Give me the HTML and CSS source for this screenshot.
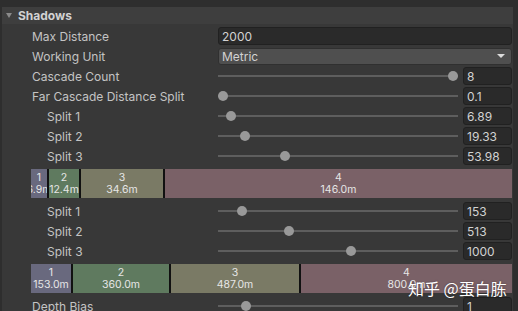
FILE: index.html
```html
<!DOCTYPE html>
<html lang="en">
<head>
    <meta charset="UTF-8">
    <meta name="viewport" content="width=device-width, initial-scale=1.0">
    <title>Shadows</title>
    <link rel="stylesheet" href="styles.css">
</head>
<body>
    <div class="inspector">
        <div class="header">
            <span class="foldout"></span>
            <span class="header-title">Shadows</span>
        </div>

        <div class="content">
            <div class="row">
                <div class="label">Max Distance</div>
                <div class="field text-field">2000</div>
            </div>
            <div class="row">
                <div class="label">Working Unit</div>
                <div class="field dropdown">Metric<span class="arrow"></span></div>
            </div>
            <div class="row">
                <div class="label">Cascade Count</div>
                <div class="slider"><div class="track"><span class="knob" style="left: 230px"></span></div></div>
                <div class="number">8</div>
            </div>
            <div class="row">
                <div class="label">Far Cascade Distance Split</div>
                <div class="slider"><div class="track"><span class="knob" style="left: 0px"></span></div></div>
                <div class="number">0.1</div>
            </div>
            <div class="row sub">
                <div class="label">Split 1</div>
                <div class="slider"><div class="track"><span class="knob" style="left: 8px"></span></div></div>
                <div class="number">6.89</div>
            </div>
            <div class="row sub">
                <div class="label">Split 2</div>
                <div class="slider"><div class="track"><span class="knob" style="left: 22px"></span></div></div>
                <div class="number">19.33</div>
            </div>
            <div class="row sub">
                <div class="label">Split 3</div>
                <div class="slider"><div class="track"><span class="knob" style="left: 62px"></span></div></div>
                <div class="number">53.98</div>
            </div>

            <div class="cascades">
                <div class="cascade c1" style="width: 16px"><span>1</span><span>6.9m</span></div>
                <div class="cascade c2" style="width: 30px"><span>2</span><span>12.4m</span></div>
                <div class="cascade c3" style="width: 82px"><span>3</span><span>34.6m</span></div>
                <div class="cascade c4" style="flex: 1"><span>4</span><span>146.0m</span></div>
            </div>

            <div class="row sub">
                <div class="label">Split 1</div>
                <div class="slider"><div class="track"><span class="knob" style="left: 19px"></span></div></div>
                <div class="number">153</div>
            </div>
            <div class="row sub">
                <div class="label">Split 2</div>
                <div class="slider"><div class="track"><span class="knob" style="left: 66px"></span></div></div>
                <div class="number">513</div>
            </div>
            <div class="row sub">
                <div class="label">Split 3</div>
                <div class="slider"><div class="track"><span class="knob" style="left: 128px"></span></div></div>
                <div class="number">1000</div>
            </div>

            <div class="cascades">
                <div class="cascade c1" style="width: 40px"><span>1</span><span>153.0m</span></div>
                <div class="cascade c2" style="width: 96px"><span>2</span><span>360.0m</span></div>
                <div class="cascade c3" style="width: 128px"><span>3</span><span>487.0m</span></div>
                <div class="cascade c4" style="flex: 1"><span>4</span><span>800.0m</span></div>
            </div>

            <div class="row">
                <div class="label">Depth Bias</div>
                <div class="slider"><div class="track"><span class="knob" style="left: 23px"></span></div></div>
                <div class="number">1</div>
            </div>
        </div>
    </div>

    <div class="watermark">知乎 @蛋白胨</div>
</body>
</html>
```

FILE: styles.css
```css
:root {
    --body-color: #2e2e2e;
    --panel-color: #383838;
    --header-color: #3e3e3e;
    --text-color: #c4c4c4;
    --field-color: #2a2a2a;
    --field-border: #212121;
    --track-color: #5e5e5e;
    --knob-color: #999999;
    --font: Inter, "Noto Sans CJK SC", sans-serif;
}

* {
    box-sizing: border-box;
    margin: 0;
    padding: 0;
}

body {
    width: 518px;
    height: 311px;
    overflow: hidden;
    background-color: var(--body-color);
    color: var(--text-color);
    font-family: var(--font);
    font-size: 12px;
    padding-top: 7px;
    position: relative;
}

.inspector {
    margin-left: 2px;
    width: 511px;
    height: 304px;
    background-color: var(--panel-color);
}

.header {
    display: flex;
    align-items: center;
    gap: 6px;
    height: 17px;
    padding-left: 4px;
    background-color: var(--header-color);
}

.foldout {
    width: 0;
    height: 0;
    border-left: 3px solid transparent;
    border-right: 3px solid transparent;
    border-top: 5px solid #8a8a8a;
}

.header-title {
    font-weight: 700;
    color: #d2d2d2;
}

.content {
    padding: 2px 1px 0 29px;
}

.row {
    display: flex;
    align-items: center;
    height: 20px;
}

.label {
    width: 187px;
    flex-shrink: 0;
    padding-left: 1px;
    white-space: nowrap;
}

.row.sub .label {
    padding-left: 16px;
}

.field {
    flex: 1;
    height: 18px;
    border-radius: 3px;
    display: flex;
    align-items: center;
    padding-left: 3px;
    color: #d2d2d2;
}

.text-field {
    background-color: var(--field-color);
    border: 1px solid var(--field-border);
}

.dropdown {
    background-color: #4f4f4f;
    border: 1px solid #303030;
    height: 17px;
    justify-content: space-between;
    padding-right: 6px;
}

.arrow {
    width: 0;
    height: 0;
    border-left: 4px solid transparent;
    border-right: 4px solid transparent;
    border-top: 4px solid #dcdcdc;
}

.slider {
    width: 240px;
    height: 20px;
    display: flex;
    align-items: center;
}

.track {
    position: relative;
    width: 100%;
    height: 2px;
    background-color: var(--track-color);
}

.knob {
    position: absolute;
    top: -4px;
    width: 10px;
    height: 10px;
    border-radius: 50%;
    background-color: var(--knob-color);
}

.number {
    margin-left: 5px;
    flex: 1;
    height: 18px;
    padding-left: 3px;
    display: flex;
    align-items: center;
    background-color: var(--field-color);
    border: 1px solid var(--field-border);
    border-radius: 3px;
    color: #d2d2d2;
}

.cascades {
    display: flex;
    gap: 2px;
    height: 29px;
    margin: 3px 0 3px 0;
    background-color: #111111;
}

.cascade {
    display: flex;
    flex-direction: column;
    align-items: center;
    justify-content: center;
    overflow: hidden;
    font-size: 10.5px;
    line-height: 12px;
    color: #e6e6e6;
    white-space: nowrap;
}

.c1 { background-color: #69697e; }
.c2 { background-color: #5f7a5f; }
.c3 { background-color: #7a7a65; }
.c4 { background-color: #7a6167; }

.watermark {
    position: absolute;
    left: 408px;
    top: 276px;
    font-family: "Noto Sans CJK SC", sans-serif;
    font-size: 16px;
    color: #ffffff;
    text-shadow: 0 0 2px rgba(0, 0, 0, 0.4);
}
```
